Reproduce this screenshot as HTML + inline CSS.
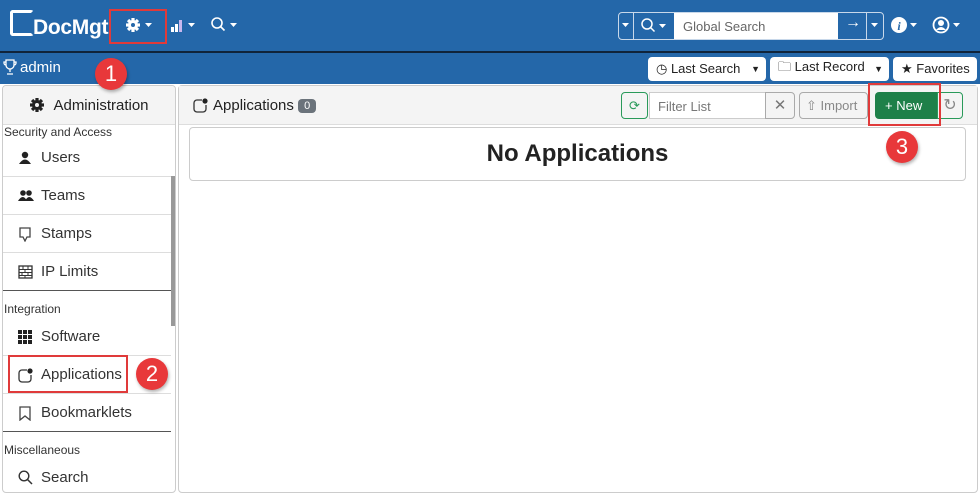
<!DOCTYPE html>
<html><head><meta charset="utf-8"><style>
*{box-sizing:border-box;margin:0;padding:0}
body{width:980px;height:497px;overflow:hidden;background:#fff;font-family:"Liberation Sans",sans-serif;position:relative;color:#222}
.a{position:absolute}
.top{left:0;top:0;width:980px;height:51px;background:#2467a9}
.line{left:0;top:51px;width:980px;height:2px;background:#10243a}
.bar2{left:0;top:53px;width:980px;height:31px;background:#2467a9}
.wb{background:#fff;border-radius:4px;font-size:13px;color:#222;display:flex;align-items:center}
.side{left:2px;top:85px;width:174px;height:408px;border:1px solid #ccc;border-radius:4px;background:#fff;overflow:hidden}
.sh{left:0;top:0;width:172px;height:39px;background:#f4f4f4;border-bottom:1px solid #ddd;font-size:15px;display:flex;align-items:center;justify-content:center}
.it{left:0;width:168px;height:38px;border-bottom:1px solid #ddd;font-size:15px;display:flex;align-items:center;padding-left:38px;color:#333}
.lab{left:1px;font-size:12px;color:#333}
.ic{position:absolute;left:15px;top:12px}
.main{left:178px;top:85px;width:800px;height:408px;border:1px solid #ccc;border-radius:4px}
.mh{left:0;top:0;width:798px;height:39px;background:#f4f4f4;border-bottom:1px solid #ddd}
.red{border:2px solid #e03a3a}
.badge{width:32px;height:32px;border-radius:50%;background:#e8383a;color:#fff;font-size:22px;display:flex;align-items:center;justify-content:center;box-shadow:1px 2px 3px rgba(0,0,0,.3)}
</style></head><body>
<svg width="0" height="0" style="position:absolute"><defs>
<g id="gear"><g fill="currentColor"><rect x="-1.6" y="-7" width="3.2" height="14"/><rect x="-1.6" y="-7" width="3.2" height="14" transform="rotate(45)"/><rect x="-1.6" y="-7" width="3.2" height="14" transform="rotate(90)"/><rect x="-1.6" y="-7" width="3.2" height="14" transform="rotate(135)"/><circle r="5"/></g><circle r="2" fill="var(--h)"/></g>
</defs></svg>
<div class="a top"></div>
<div class="a" style="left:10px;top:10px;width:24px;height:26px;border:3px solid #fff;border-radius:3px;border-right-color:transparent"></div>
<div class="a" style="left:33px;top:16px;color:#fff;font-size:21px;font-weight:bold;letter-spacing:-0.3px">DocMgt</div>
<div class="a red" style="left:109px;top:9px;width:58px;height:35px"></div>
<svg class="a" style="left:125px;top:17px;color:#fff;--h:#2467a9" width="30" height="16" viewBox="0 0 30 16"><use href="#gear" transform="translate(8 8)"/><path d="M20 6h7l-3.5 4z" fill="#fff"/></svg>
<svg class="a" style="left:170px;top:17px" width="28" height="16"><rect x="1" y="10" width="3" height="5" fill="#fff"/><rect x="5" y="7" width="3" height="8" fill="#fff"/><rect x="9" y="3" width="3" height="12" fill="#c9b8ef"/><path d="M18 6h7l-3.5 4z" fill="#fff"/></svg>
<svg class="a" style="left:210px;top:16px" width="30" height="18"><circle cx="7" cy="7" r="5" fill="none" stroke="#fff" stroke-width="1.6"/><path d="M10.5 10.5l4 4" stroke="#fff" stroke-width="1.6"/><path d="M20 7h7l-3.5 4z" fill="#fff"/></svg>
<div class="a" style="left:618px;top:12px;width:266px;height:28px;border:1px solid #c8d8ea;border-radius:4px"></div>
<div class="a" style="left:633px;top:12px;width:1px;height:28px;background:#c8d8ea"></div>
<svg class="a" style="left:620px;top:20px" width="12" height="10"><path d="M2 3h7l-3.5 4z" fill="#fff"/></svg>
<svg class="a" style="left:640px;top:17px" width="30" height="18"><circle cx="7" cy="7" r="5" fill="none" stroke="#fff" stroke-width="1.5"/><path d="M10.5 10.5l4 4" stroke="#fff" stroke-width="1.5"/><path d="M19 7h7l-3.5 4z" fill="#fff"/></svg>
<div class="a" style="left:674px;top:13px;width:164px;height:26px;background:#fff;font-size:13px;color:#666;padding:6px 9px">Global Search</div>
<div class="a" style="left:845px;top:14px;color:#fff;font-size:16px">→</div>
<div class="a" style="left:866px;top:12px;width:1px;height:28px;background:#c8d8ea"></div>
<svg class="a" style="left:868px;top:20px" width="14" height="10"><path d="M3 3h7l-3.5 4z" fill="#fff"/></svg>
<svg class="a" style="left:890px;top:16px" width="30" height="20"><circle cx="9" cy="9" r="8" fill="#fff"/><text x="9" y="14" font-size="12" font-style="italic" font-weight="bold" fill="#2467a9" text-anchor="middle" font-family="Liberation Serif">i</text><path d="M20 7h7l-3.5 4z" fill="#fff"/></svg>
<svg class="a" style="left:932px;top:16px" width="32" height="20"><circle cx="9" cy="9" r="7.5" fill="none" stroke="#fff" stroke-width="1.8"/><circle cx="9" cy="7" r="3" fill="#fff"/><path d="M4 14q5-6 10 0" fill="#fff"/><path d="M21 7h7l-3.5 4z" fill="#fff"/></svg>
<div class="a line"></div>
<div class="a bar2"></div>
<svg class="a" style="left:3px;top:59px" width="14" height="16"><path d="M3 1h8v5a4 4 0 0 1-8 0z M3 3H1v1a2 2 0 0 0 2 2 M11 3h2v1a2 2 0 0 1-2 2 M7 10v3 M4 15h6" fill="none" stroke="#fff" stroke-width="1.3"/></svg>
<div class="a" style="left:20px;top:59px;color:#fff;font-size:15px">admin</div>
<div class="a wb" style="left:648px;top:57px;width:118px;height:24px;padding-left:8px">◷&nbsp;Last Search<span style="position:absolute;right:6px;font-size:9px">▼</span></div>
<div class="a wb" style="left:770px;top:57px;width:119px;height:24px;padding-left:8px">🗀&nbsp;Last Record<span style="position:absolute;right:6px;font-size:9px">▼</span></div>
<div class="a wb" style="left:893px;top:57px;width:84px;height:24px;padding-left:8px">★&nbsp;Favorites</div>
<div class="a side">
 <div class="a sh"><svg width="16" height="16" style="margin-right:8px;color:#222;--h:#f4f4f4"><use href="#gear" transform="translate(8 8)"/></svg>Administration</div>
 <div class="a lab" style="top:39px">Security and Access</div>
 <div class="a it" style="top:53px"><svg class="ic" width="14" height="14"><circle cx="7" cy="4" r="3.2" fill="#222"/><path d="M1 13q6-9 12 0z" fill="#222"/></svg>Users</div>
 <div class="a it" style="top:91px"><svg class="ic" width="16" height="14"><circle cx="5" cy="4" r="2.8" fill="#222"/><circle cx="11" cy="4" r="2.8" fill="#222"/><path d="M0 12q5-8 9 0z M7 12q4-8 9 0z" fill="#222"/></svg>Teams</div>
 <div class="a it" style="top:129px"><svg class="ic" width="14" height="15"><path d="M2 1h10v9H9l-2 4-2-4H2z" fill="none" stroke="#444" stroke-width="1.3"/></svg>Stamps</div>
 <div class="a it" style="top:167px;border-bottom:1px solid #555"><svg class="ic" width="15" height="14"><rect x="1" y="1" width="13" height="12" fill="none" stroke="#333" stroke-width="1.3"/><path d="M1 4.5h13M1 7.5h13M1 10.5h13M5 1v3.5M10 1v3.5M7 4.5v3M4 7.5v3M10 7.5v3M7 10.5v3" stroke="#333" stroke-width="1"/></svg>IP Limits</div>
 <div class="a lab" style="top:216px">Integration</div>
 <div class="a it" style="top:232px"><svg class="ic" width="14" height="14"><g fill="#222"><rect x="0" y="0" width="4" height="4"/><rect x="5" y="0" width="4" height="4"/><rect x="10" y="0" width="4" height="4"/><rect x="0" y="5" width="4" height="4"/><rect x="5" y="5" width="4" height="4"/><rect x="10" y="5" width="4" height="4"/><rect x="0" y="10" width="4" height="4"/><rect x="5" y="10" width="4" height="4"/><rect x="10" y="10" width="4" height="4"/></g></svg>Software</div>
 <div class="a it" style="top:270px"><svg class="ic" width="15" height="15"><path d="M9 2H4a3 3 0 0 0-3 3v6a3 3 0 0 0 3 3h6a3 3 0 0 0 3-3V7" fill="none" stroke="#333" stroke-width="1.3"/><circle cx="12" cy="3" r="2.6" fill="#222"/></svg>Applications</div>
 <div class="a it" style="top:308px;border-bottom:1px solid #555"><svg class="ic" width="14" height="15"><path d="M2 1h10v13l-5-4-5 4z" fill="none" stroke="#444" stroke-width="1.3"/></svg>Bookmarklets</div>
 <div class="a lab" style="top:357px">Miscellaneous</div>
 <div class="a it" style="top:372px;border:none"><svg class="ic" width="15" height="15"><circle cx="6" cy="6" r="4.8" fill="none" stroke="#333" stroke-width="1.4"/><path d="M9.5 9.5l4.5 4.5" stroke="#333" stroke-width="1.5"/></svg>Search</div>
 <div class="a" style="left:168px;top:90px;width:5px;height:150px;background:#999"></div>
</div>
<div class="a red" style="left:8px;top:355px;width:120px;height:38px"></div>
<div class="a main">
 <div class="a mh"></div>
 <div class="a" style="left:14px;top:11px;font-size:15px;display:flex;align-items:center"><svg width="16" height="15" style="margin-right:4px"><path d="M9 2H4a3 3 0 0 0-3 3v6a3 3 0 0 0 3 3h6a3 3 0 0 0 3-3V7" fill="none" stroke="#333" stroke-width="1.3"/><circle cx="12" cy="3" r="2.6" fill="#222"/></svg>Applications&nbsp;<span style="background:#6b737b;color:#fff;font-size:11px;border-radius:4px;padding:1px 6px">0</span></div>
 <div class="a" style="left:442px;top:6px;width:27px;height:27px;border:1px solid #2a9a5a;border-radius:4px;color:#2a9a5a;font-size:13px;text-align:center;line-height:25px">⟳</div>
 <div class="a" style="left:470px;top:6px;width:117px;height:27px;border:1px solid #ccc;background:#fff;font-size:13px;color:#777;padding:6px 8px">Filter List</div>
 <div class="a" style="left:586px;top:6px;width:30px;height:27px;border:1px solid #aaa;border-radius:0 4px 4px 0;color:#777;text-align:center;line-height:25px;font-size:15px">✕</div>
 <div class="a" style="left:620px;top:6px;width:69px;height:27px;border:1px solid #aaa;border-radius:4px;color:#888;font-size:13px;padding:5px 6px">⇧ Import</div>
 <div class="a" style="left:696px;top:6px;width:62px;height:27px;background:#1e8049;border-radius:4px 0 0 4px;color:#fff;font-size:13px;padding:6px 10px">+ New</div>
 <div class="a" style="left:758px;top:6px;width:26px;height:27px;border:1px solid #2a9a5a;border-radius:0 4px 4px 0;color:#888;text-align:center;line-height:25px">↻</div>
 <div class="a" style="left:10px;top:41px;width:777px;height:54px;border:1px solid #ccc;border-radius:4px;font-size:24px;font-weight:bold;color:#222;display:flex;align-items:center;justify-content:center">No Applications</div>
</div>
<div class="a red" style="left:868px;top:83px;width:73px;height:43px"></div>
<div class="a badge" style="left:95px;top:58px">1</div>
<div class="a badge" style="left:136px;top:358px">2</div>
<div class="a badge" style="left:886px;top:131px">3</div>
</body></html>
